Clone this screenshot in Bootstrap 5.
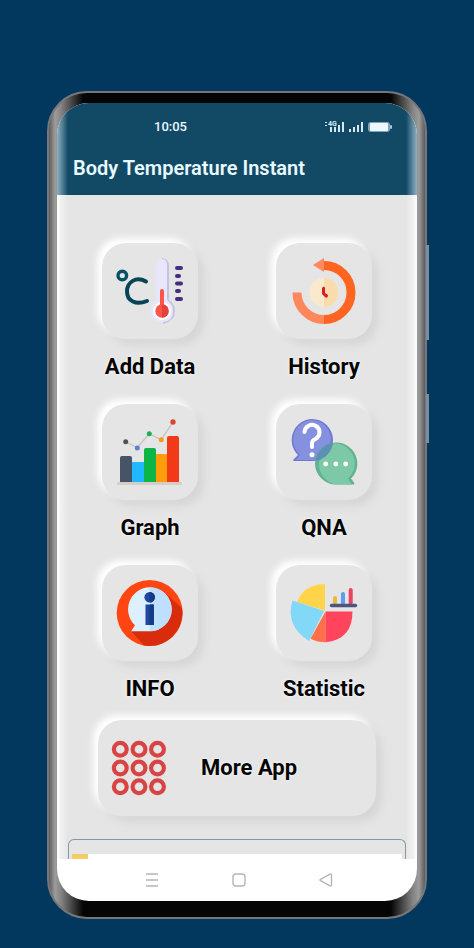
<!DOCTYPE html>
<html lang="en">
<head>
<meta charset="utf-8">
<meta name="viewport" content="width=device-width, initial-scale=1">
<title>Body Temperature Instant</title>
<link href="https://cdn.jsdelivr.net/npm/bootstrap@5.3.0/dist/css/bootstrap.min.css" rel="stylesheet">
<style>
body { background: #03385e; font-family: Roboto, "Liberation Sans", sans-serif; color: #050505; padding: 91px 47px 28px; }
.phone { max-width: 480px; padding: 10px 8px 16px; border: 2px solid #77777b; border-radius: 40px;
  background: linear-gradient(90deg, #5c5a5b 0, #9c9c9d 6px, #858484 12px, transparent 34px, transparent calc(100% - 34px), #858484 calc(100% - 12px), #9c9c9d calc(100% - 6px), #5c5a5b 100%) #050505; }
.side-key { left: 100%; width: 3px; margin-left: 1px; background: #78909e; }
.key-volume { top: 152px; height: 95px; }
.key-power { top: 301px; height: 49px; }
.screen { border-radius: 32px; }
.top-bar { background: linear-gradient(90deg, #8fb1c1 0, #124a66 11px, #124a66 calc(100% - 11px), #8fb1c1 100%); color: #e9f9ff; padding: 15px 16px 15px; }
.status-row { height: 18px; padding-left: 81px; padding-right: 9px; font-size: 13px; line-height: 18px; font-weight: 500; }
.app-title { font-size: 20px; line-height: 24px; margin-top: 20px; font-weight: 600; }
.page-area { background: linear-gradient(90deg, #fff 0, #f0f0f0 4px, #e5e5e5 11px, #e5e5e5 calc(100% - 11px), #f0f0f0 calc(100% - 4px), #fff 100%); padding: 48px 6px 0; }
.menu-grid { row-gap: 25px; }
.menu-item { font-size: 22px; line-height: 24px; font-weight: 700; color: inherit; text-shadow: 0 0 3px #fff; }
.raised { background: #e5e5e5; border-radius: 24px; box-shadow: -5px -5px 7px #fff, 6px 6px 9px #d6d6d6; }
.tile { width: 96px; height: 96px; }
.tile svg { width: 96px; height: 96px; display: block; }
.menu-label { margin-top: 16px; }
.more-btn { height: 96px; margin: 19px 35px 0; padding: 0 13px; gap: 34px; }
.more-btn svg { width: 56px; height: 56px; }
.ad-box { height: 20px; margin: 23px 5px 0; border: 1px solid #839aa5; border-bottom: 0; border-radius: 6px 6px 0 0; padding: 0 3px; }
.ad-tag { width: 16px; height: 5px; background: #f3cc63; }
.ad-body { height: 5px; background: #fff; }
.nav-strip { height: 42px; gap: 71px; padding-left: 4px; }
.nav-strip svg { width: 16px; height: 16px; }
</style>
<script src="https://cdn.jsdelivr.net/npm/bootstrap@5.3.0/dist/js/bootstrap.bundle.min.js"></script>
</head>
<body>
<div class="phone position-relative mx-auto">
  <span class="side-key key-volume position-absolute"></span>
  <span class="side-key key-power position-absolute"></span>
  <div class="screen overflow-hidden bg-white">
    <header class="top-bar">
      <div class="status-row d-flex align-items-center justify-content-between">
        <span>10:05</span>
        <svg width="67" height="16" viewBox="0 0 67 16" fill="#d5eaf2" aria-hidden="true">
          <path d="M0 3h2v1H0zM0 6h2v1H0z"/>
          <text x="3" y="7" font-size="7" font-weight="700">4G</text>
          <path d="M5 8h2v5H5zM9 8h2v5H9zM13 6h2v7h-2zM17 3h2v10h-2zM24 10h2v3h-2zM28 8h2v5h-2zM32 6h2v7h-2zM36 3h2v10h-2z"/>
          <rect x="43" y="3" width="22" height="10" rx="3" fill="#7fa5b6"/>
          <rect x="45" y="4" width="18" height="8" rx="1" fill="#edf9fd"/>
          <rect x="65" y="6" width="2" height="4" rx="1" fill="#a9c7d3"/>
        </svg>
      </div>
      <h1 class="app-title mb-0 text-nowrap">Body Temperature Instant</h1>
    </header>
    <main class="page-area">
      <div class="menu-grid row row-cols-2 gx-0 mx-0">
        <div class="col text-center"><button type="button" class="menu-item d-block w-100 border-0 bg-transparent p-0">
          <span class="tile raised d-block mx-auto"><svg viewBox="0 0 96 96" fill="none" stroke-linecap="round" aria-hidden="true">
            <circle cx="20.300" cy="32.500" r="4.300" stroke="#075164" stroke-width="3.400"/>
            <path d="M44 38.500C34 33 25 39 25 48.500S34 62.500 45 58" stroke="#064456" stroke-width="4"/>
            <path d="M60 15q7 1 7 8v34q6 4 6 11 0 10-12 13z" fill="#c6c1e2"/>
            <path d="M54 22q0-6 6-6 5 0 5 6v35q6 4 6 11 0 11-11 11T49 68q0-7 5-11z" fill="#e8e6fb"/>
            <circle cx="60" cy="68" r="9" fill="#fff"/>
            <path d="M60 48v20" stroke="#ff5547" stroke-width="4"/><circle cx="60" cy="68" r="6.700" fill="#ff5547"/><path d="M60 61.300a6.700 6.700 0 0 1 0 13.400z" fill="#e44240"/>
            <path d="M75 25h4M75 33h2M75 40.500h4M75 48h2M75 56h4" stroke="#432e80" stroke-width="4"/>
          </svg></span>
          <span class="menu-label d-block">Add Data</span></button></div>
        <div class="col text-center"><button type="button" class="menu-item d-block w-100 border-0 bg-transparent p-0">
          <span class="tile raised d-block mx-auto"><svg viewBox="0 0 96 96" fill="none" aria-hidden="true">
            <path d="M21 49.500a27 27 0 0 0 27 27" stroke="#ff875c" stroke-width="9"/>
            <path d="M48 76.500a27 27 0 0 0 0-54" stroke="#ff6520" stroke-width="9"/>
            <path d="M37 22l11-7v14z" fill="#ff8a60"/>
            <circle cx="48" cy="49.500" r="14.500" fill="#fbe9cd"/><path d="M48 35a14.500 14.500 0 0 1 0 29z" fill="#f8dcae"/>
            <path d="M46 45q2-3 3 0v5l3 2q0 4-3 2l-3-3z" fill="#db1d24"/>
          </svg></span>
          <span class="menu-label d-block">History</span></button></div>
        <div class="col text-center"><button type="button" class="menu-item d-block w-100 border-0 bg-transparent p-0">
          <span class="tile raised d-block mx-auto"><svg viewBox="0 0 96 96" aria-hidden="true">
            <path d="M18 78V54q0-2 2-2h8q2 0 2 2v24z" fill="#475468"/>
            <path d="M30 78V58h12v20z" fill="#20b9ff"/>
            <path d="M42 78V46q0-2 2-2h8q2 0 2 2v32z" fill="#0db446"/>
            <path d="M54 78V50h12v28z" fill="#ff9d0a"/>
            <path d="M65 78V34q0-2 2-2h8q2 0 2 2v44z" fill="#f23a18"/>
            <rect x="15" y="78" width="65" height="3" rx="1" fill="#d8ccc8"/>
            <path d="M23.700 37.700l11.600 6 12-14 12 6L71 18" fill="none" stroke="#c9bfbc" stroke-width="1.200"/>
            <circle cx="23.700" cy="37.700" r="2.500" fill="#50525a"/><circle cx="35.300" cy="43.900" r="2.500" fill="#5c7fd6"/><circle cx="47.300" cy="29.800" r="2.500" fill="#19b153"/><circle cx="59.300" cy="35.700" r="2.500" fill="#f49a1c"/><circle cx="71" cy="18" r="2.700" fill="#d9432f"/>
          </svg></span>
          <span class="menu-label d-block">Graph</span></button></div>
        <div class="col text-center"><button type="button" class="menu-item d-block w-100 border-0 bg-transparent p-0">
          <span class="tile raised d-block mx-auto"><svg viewBox="0 0 96 96" aria-hidden="true">
            <path d="M36 15a21 21 0 0 1 0 42H18q-2-1 0-2l4-4A21 21 0 0 1 36 15z" fill="#7078d2"/>
            <path d="M35 16a20 20 0 0 1 0 40H20l4-5A20 20 0 0 1 35 16z" fill="#8590de"/>
            <path d="M60 38.500a21 21 0 0 1 15 36l3 4q1 2-1 2H60a21 21 0 0 1 0-42z" fill="#60b393"/>
            <path d="M59 39.500a20 20 0 0 1 13 35l4 6H60a21 21 0 0 1-1-41z" fill="#7dc8a6"/>
            <path d="M39.500 57A21 21 0 0 1 57 38.700 21 21 0 0 1 39.500 57z" fill="#5d91b4"/>
            <path d="M28.500 28a7.500 7.500 0 1 1 11 7q-3.500 1.500-3.500 4v4" fill="none" stroke="#fff" stroke-width="4" stroke-linecap="round"/>
            <circle cx="36" cy="50.700" r="2.500" fill="#fff"/>
            <g fill="#fff"><circle cx="49.700" cy="60" r="2.400"/><circle cx="59.800" cy="60" r="2.400"/><circle cx="69.700" cy="60" r="2.400"/></g>
          </svg></span>
          <span class="menu-label d-block">QNA</span></button></div>
        <div class="col text-center"><button type="button" class="menu-item d-block w-100 border-0 bg-transparent p-0">
          <span class="tile raised d-block mx-auto"><svg viewBox="0 0 96 96" aria-hidden="true">
            <circle cx="47.700" cy="48" r="33" fill="#ff4612"/>
            <path d="M64 29l16 14A33 33 0 0 1 42 80.500L29 66z" fill="#d92c0c"/>
            <path d="M47.700 22.300a22 22 0 0 1 0 44H29l4-6a22 22 0 0 1 14.700-38z" fill="#ddf0ff"/>
            <path d="M47.700 22.300a22 22 0 0 1 0 44z" fill="#bfdfff"/>
            <circle cx="47.700" cy="32.300" r="5.300" fill="#1e489d"/><path d="M43.500 39.500h8.400V60h-8.400z" fill="#1e489d"/>
            <path d="M47.700 27a5.300 5.300 0 0 1 0 10.600zM47.700 39.500h4.200V60h-4.200z" fill="#153a83"/>
          </svg></span>
          <span class="menu-label d-block">INFO</span></button></div>
        <div class="col text-center"><button type="button" class="menu-item d-block w-100 border-0 bg-transparent p-0">
          <span class="tile raised d-block mx-auto"><svg viewBox="0 0 96 96" aria-hidden="true">
            <path d="M49 45.500L21 37Q28 19 49 19z" fill="#ffd44b"/>
            <path d="M48 46L33 76Q9 61 16.500 35.500z" fill="#81d8f7"/>
            <path d="M49.500 46.500v30.800q-8 0-15-3.500z" fill="#ff7048"/>
            <path d="M49.500 46.500h27q0 28-27 30.800z" fill="#ff445b"/>
            <g fill="none" stroke-width="4" stroke-linecap="round"><path d="M59 33v5" stroke="#e5bb43"/><path d="M67 29v9" stroke="#5e9cf4"/><path d="M74.700 25v13" stroke="#ed4161"/><path d="M55.500 40.500h24" stroke="#4d5578" stroke-width="3.400"/></g>
          </svg></span>
          <span class="menu-label d-block">Statistic</span></button></div>
      </div>
      <div class="d-grid">
        <button type="button" class="more-btn menu-item raised border-0 d-flex align-items-center">
          <svg viewBox="0 0 56 56" fill="none" stroke="#d94343" stroke-width="4.200" aria-hidden="true"><circle cx="9.300" cy="9.300" r="6.400"/><circle cx="28" cy="9.300" r="6.400"/><circle cx="46.500" cy="9.300" r="6.400"/><circle cx="9.300" cy="28" r="6.400"/><circle cx="28" cy="28" r="6.400"/><circle cx="46.500" cy="28" r="6.400"/><circle cx="9.300" cy="46.700" r="6.400"/><circle cx="28" cy="46.700" r="6.400"/><circle cx="46.500" cy="46.700" r="6.400"/></svg>
          <span>More App</span>
        </button>
      </div>
      <div class="ad-box d-flex align-items-end"><span class="ad-tag"></span><span class="ad-body flex-grow-1"></span></div>
    </main>
    <nav class="nav-strip d-flex align-items-center justify-content-center" aria-label="System">
      <button type="button" class="border-0 bg-transparent p-0 d-flex" aria-label="Recent apps"><svg viewBox="0 0 16 16" stroke="#b5b5b5" stroke-width="1.400"><path d="M2 2h12M2 8h12M2 14h12"/></svg></button>
      <button type="button" class="border-0 bg-transparent p-0 d-flex" aria-label="Home"><svg viewBox="0 0 16 16" fill="none" stroke="#b5b5b5" stroke-width="1.400"><rect x="2" y="2" width="12" height="12" rx="3"/></svg></button>
      <button type="button" class="border-0 bg-transparent p-0 d-flex" aria-label="Back"><svg viewBox="0 0 16 16" fill="none" stroke="#b5b5b5" stroke-width="1.400" stroke-linejoin="round"><path d="M2.500 7.300L12 2.200q1.500-.5 1.500 1v9.600q0 1.500-1.500 1L2.500 8.700q-1-.7 0-1.400z"/></svg></button>
    </nav>
  </div>
</div>
</body>
</html>
